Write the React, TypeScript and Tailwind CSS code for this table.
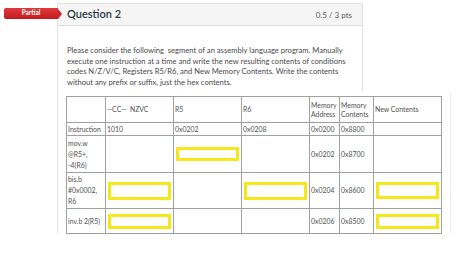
import React from 'react';

const Box: React.FC<{ h?: string }> = ({ h = 'h-[17px]' }) => (
  <div className={`mx-[1px] ${h} border-[3px] border-[#f6e61a] bg-white`} />
);

const cell = 'border border-[#a0a0a0] px-[1px] align-middle';

const App: React.FC = () => {
  return (
    <div className="relative w-[474px] h-[258px] bg-white overflow-hidden" style={{ fontFamily: 'Lato, "Open Sans", sans-serif' }}>
      <div className="absolute left-[4px] top-[8px] h-[11px] w-[58px] flex items-center">
        <div className="h-full w-[54px] bg-gradient-to-b from-[#e0393d] to-[#c3191c] rounded-l-[2px] flex items-center justify-center">
          <span className="text-[6.5px] font-bold text-white leading-none">Partial</span>
        </div>
        <div className="w-0 h-0 border-y-[5.5px] border-y-transparent border-l-[4px] border-l-[#cf2528]" />
      </div>

      <div className="pt-[3px]">
        <div className="ml-[57px] w-[306px] border-x border-t border-[#e3e3e3] h-[88px]">
          <div className="h-[22px] bg-[#f5f5f5] border-b border-[#dedede] flex items-center justify-between pl-[9px] pr-[10px]">
            <span className="text-[11px] font-semibold text-[#2d3b45]">Question 2</span>
            <span className="text-[8px] text-[#555]">0.5 / 3 pts</span>
          </div>
          <p className="pl-[9px] pt-[19px] text-[7.6px] leading-[10.7px] text-[#4a4a4a] whitespace-nowrap">
            Please consider the following&nbsp; segment of an assembly language program. Manually
            <br />
            execute one instruction at a time and write the new resulting contents of conditions
            <br />
            codes N/Z/V/C, Registers R5/R6, and New Memory Contents. Write the contents
            <br />
            without any prefix or suffix, just the hex contents.
          </p>
        </div>

        <div className="ml-[57px] w-[394px] border-l border-[#e3e3e3] pt-[5px] h-[142px] relative">
          <div className="absolute right-0 top-[2px] bottom-0 border-r border-[#ececec]" />
          <table className="ml-[8px] border-collapse text-[6.9px] leading-[11px] text-[#505050] table-fixed w-[375px]">
            <colgroup>
              <col className="w-[39px]" />
              <col className="w-[68px]" />
              <col className="w-[68px]" />
              <col className="w-[68px]" />
              <col className="w-[30px]" />
              <col className="w-[34px]" />
              <col className="w-[68px]" />
            </colgroup>
            <tbody>
              <tr className="h-[26px]">
                <td className={cell}></td>
                <td className={cell}>--CC--&nbsp; NZVC</td>
                <td className={cell}>R5</td>
                <td className={cell}>R6</td>
                <td className={cell + ' leading-[9px]'}>Memory Address</td>
                <td className={cell + ' leading-[9px]'}>Memory Contents</td>
                <td className={cell}>New Contents</td>
              </tr>
              <tr className="h-[13px]">
                <td className={cell + ' whitespace-nowrap'}>Instruction</td>
                <td className={cell}>1010</td>
                <td className={cell}>0x0202</td>
                <td className={cell}>0x0208</td>
                <td className={cell}>0x0200</td>
                <td className={cell}>0x8800</td>
                <td className={cell}></td>
              </tr>
              <tr className="h-[37px]">
                <td className={cell}>mov.w @R5+, -4(R6)</td>
                <td className={cell}></td>
                <td className={cell}><Box h="h-[14px]" /></td>
                <td className={cell}></td>
                <td className={cell}>0x0202</td>
                <td className={cell}>0x8700</td>
                <td className={cell}></td>
              </tr>
              <tr className="h-[36px]">
                <td className={cell}>bis.b #0x0002, R6</td>
                <td className={cell}><Box h="h-[18px]" /></td>
                <td className={cell}></td>
                <td className={cell}><Box h="h-[18px]" /></td>
                <td className={cell}>0x0204</td>
                <td className={cell}>0x8600</td>
                <td className={cell}><Box h="h-[17px]" /></td>
              </tr>
              <tr className="h-[25px]">
                <td className={cell + ' whitespace-nowrap'}>inv.b 2(R5)</td>
                <td className={cell}><Box h="h-[15px]" /></td>
                <td className={cell}></td>
                <td className={cell}></td>
                <td className={cell}>0x0206</td>
                <td className={cell}>0x8500</td>
                <td className={cell}><Box h="h-[15px]" /></td>
              </tr>
            </tbody>
          </table>
        </div>
      </div>
    </div>
  );
};

export default App;
